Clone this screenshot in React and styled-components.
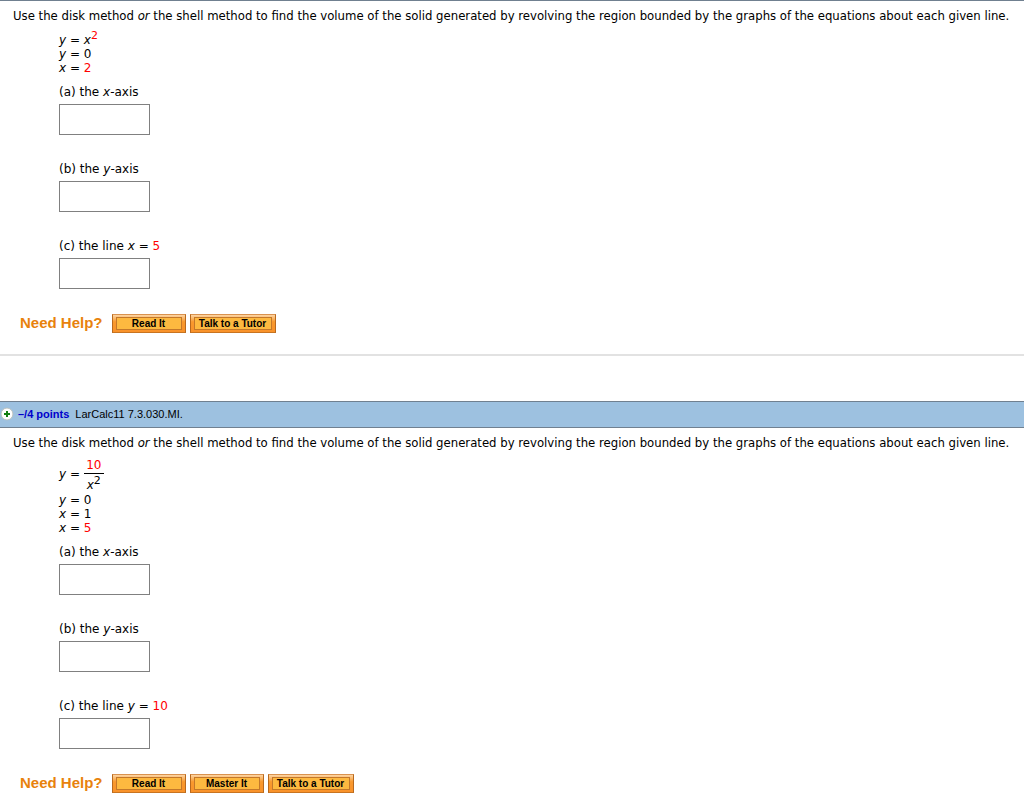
import React from 'react';
import styled, { createGlobalStyle } from 'styled-components';

const GlobalStyle = createGlobalStyle`
  * {
    box-sizing: border-box;
  }
  body {
    margin: 0;
    background: #FFFFFF;
    color: #000000;
    font-family: Verdana, "DejaVu Sans", sans-serif;
    font-size: 12px;
    line-height: 14px;
  }
`

const Question = styled.section`
  border-top: 1px solid #708090;
`

const QuestionBar = styled.header`
  display: flex;
  align-items: center;
  height: 26px;
  padding-bottom: 1px;
  background: #9DC1E0;
  border-top: 1px solid #708090;
  font-family: Arial, "Liberation Sans", sans-serif;
  font-size: 11px;
`

const ExpandButton = styled.button`
  display: flex;
  padding: 0;
  margin-right: 4px;
  border: none;
  background: transparent;
`

const Points = styled.a`
  margin-right: 6px;
  color: #0000CC;
  font-weight: bold;
  text-decoration: none;
`

const Prompt = styled.p`
  margin: 0;
  padding: 7px 12px 0 13px;
  font-family: "DejaVu Sans Condensed", Verdana, sans-serif;
  font-size: 13px;
  line-height: 16px;
`

const Work = styled.div`
  display: flex;
  flex-direction: column;
  align-items: flex-start;
  padding: 7px 0 0 59px;
`

const Equation = styled.div`
  display: flex;
  align-items: center;
  white-space: pre;
`

const PowerEquation = styled(Equation)`
  height: 16px;
  align-items: flex-end;
`

const FractionEquation = styled(Equation)`
  align-items: flex-start;
  line-height: 32px;
`

const Sup = styled.sup`
  font-size: 11px;
  line-height: 0;
  vertical-align: 5px;
`

const Red = styled.span`
  color: #FF0000;
`

const Fraction = styled.span`
  display: flex;
  flex-direction: column;
  width: 20px;
  line-height: 14px;
  text-align: center;
`

const Denominator = styled.span`
  height: 20px;
  padding-top: 4px;
  margin-top: 1px;
  border-top: 1px solid #000000;
`

const Part = styled.div`
  display: flex;
  flex-direction: column;
  gap: 5px;
  margin-top: ${props => props.$first ? '10px' : '27px'};
`

const Answer = styled.input`
  width: 91px;
  height: 31px;
  padding: 4px;
  border: 1px solid #808080;
  border-radius: 0;
  background: #FFFFFF;
  font: inherit;
`

const Help = styled.div`
  display: flex;
  align-items: center;
  gap: 4px;
  height: 24px;
  margin-top: 22px;
  padding-left: 20px;
  font-family: Arial, "Liberation Sans", sans-serif;
`

const HelpTitle = styled.span`
  margin-right: 5px;
  color: #E8820C;
  font-size: 15px;
  font-weight: bold;
`

const HelpButton = styled.button`
  width: ${props => props.$wide ? '86px' : '74px'};
  height: 19px;
  padding: 0 3px;
  border: 1px solid;
  border-color: #D9924F #B8691E #C87420 #B8691E;
  background: linear-gradient(#FCD5A4, #F9992E 40%, #F9922A);
`

const HelpFace = styled.span`
  display: block;
  height: 13px;
  border: 1px solid #C4782A;
  background: #FDB940;
  color: #000000;
  font-family: Arial, "Liberation Sans", sans-serif;
  font-size: 10px;
  font-weight: bold;
  line-height: 12px;
  white-space: nowrap;
`

const Divider = styled.hr`
  height: 2px;
  margin: 19px 0 45px;
  border: none;
  background: #E2E2E2;
`

const AnswerPart = ({ id, first, children }) => (
    <Part $first={first}>
        <label htmlFor={id}>{children}</label>
        <Answer id={id} type="text"/>
    </Part>
);

const HelpRow = ({ items }) => (
    <Help>
        <HelpTitle>Need Help?</HelpTitle>
        {items.map(item => (
            <HelpButton key={item} type="button" $wide={item.length > 10}>
                <HelpFace>{item}</HelpFace>
            </HelpButton>
        ))}
    </Help>
);

const VolumePrompt = () => (
    <Prompt>
        Use the disk method <i>or</i> the shell method to find the volume of the solid generated
        by revolving the region bounded by the graphs of the equations about each given line.
    </Prompt>
);

const PlusIcon = () => (
    <svg width="14" height="14" viewBox="0 0 14 14">
        <circle cx="7" cy="7" r="5.9" fill="#FFFFFF" stroke="#B9BDB5" strokeWidth="0.8"/>
        <path d="M7 4v6M4 7h6" stroke="#128012" strokeWidth="2"/>
    </svg>
);

const App = () => {
    return (
        <>
            <GlobalStyle/>
            <main>
                <Question>
                    <VolumePrompt/>
                    <Work>
                        <PowerEquation>
                            <span><i>y</i> = <i>x</i><Sup><Red>2</Red></Sup></span>
                        </PowerEquation>
                        <Equation><i>y</i> = 0</Equation>
                        <Equation><i>x</i> = <Red>2</Red></Equation>
                        <AnswerPart id="q1a" first>(a) the <i>x</i>-axis</AnswerPart>
                        <AnswerPart id="q1b">(b) the <i>y</i>-axis</AnswerPart>
                        <AnswerPart id="q1c">(c) the line <i>x</i> = <Red>5</Red></AnswerPart>
                    </Work>
                    <HelpRow items={['Read It', 'Talk to a Tutor']}/>
                </Question>
                <Divider/>
                <QuestionBar>
                    <ExpandButton type="button" aria-label="Expand"><PlusIcon/></ExpandButton>
                    <Points href="#points">–/4 points</Points>
                    <span>LarCalc11 7.3.030.MI.</span>
                </QuestionBar>
                <Question>
                    <VolumePrompt/>
                    <Work>
                        <FractionEquation>
                            <span><i>y</i> = </span>
                            <Fraction>
                                <Red>10</Red>
                                <Denominator><i>x</i><Sup>2</Sup></Denominator>
                            </Fraction>
                        </FractionEquation>
                        <Equation><i>y</i> = 0</Equation>
                        <Equation><i>x</i> = 1</Equation>
                        <Equation><i>x</i> = <Red>5</Red></Equation>
                        <AnswerPart id="q2a" first>(a) the <i>x</i>-axis</AnswerPart>
                        <AnswerPart id="q2b">(b) the <i>y</i>-axis</AnswerPart>
                        <AnswerPart id="q2c">(c) the line <i>y</i> = <Red>10</Red></AnswerPart>
                    </Work>
                    <HelpRow items={['Read It', 'Master It', 'Talk to a Tutor']}/>
                </Question>
            </main>
        </>
    );
};

export default App;
